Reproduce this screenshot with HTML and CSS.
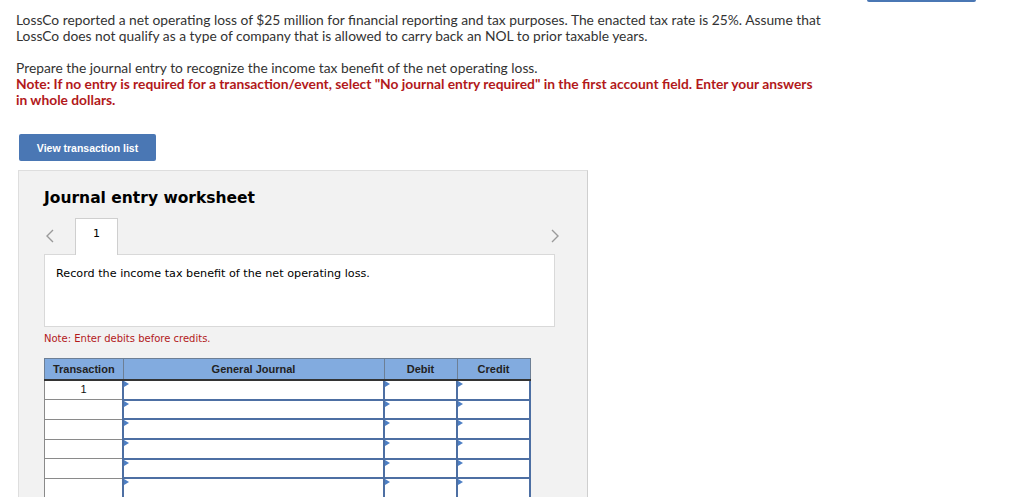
FILE: index.html
```html
<!DOCTYPE html>
<html lang="en">
<head>
    <meta charset="UTF-8">
    <title>Journal entry worksheet</title>
    <link rel="stylesheet" href="styles.css">
</head>
<body>
    <div class="top-tab"></div>
    <div class="question">
        <p>LossCo reported a net operating loss of $25 million for financial reporting and tax purposes. The enacted tax rate is 25%. Assume that LossCo does not qualify as a type of company that is allowed to carry back an NOL to prior taxable years.</p>
        <p class="task">Prepare the journal entry to recognize the income tax benefit of the net operating loss.<br>
        <strong class="note">Note: If no entry is required for a transaction/event, select "No journal entry required" in the first account field. Enter your answers in whole dollars.</strong></p>
    </div>

    <button class="view-btn">View transaction list</button>

    <div class="worksheet">
        <h2>Journal entry worksheet</h2>

        <div class="tabs">
            <svg class="arrow" width="10" height="14" viewBox="0 0 10 14"><path d="M8 1 L2 7 L8 13" fill="none" stroke="#9a9a9a" stroke-width="1.4"/></svg>
            <span class="tab">1</span>
            <svg class="arrow right" width="10" height="14" viewBox="0 0 10 14"><path d="M2 1 L8 7 L2 13" fill="none" stroke="#9a9a9a" stroke-width="1.4"/></svg>
        </div>

        <div class="tab-body">Record the income tax benefit of the net operating loss.</div>

        <div class="hint">Note: Enter debits before credits.</div>

        <table class="journal">
            <thead>
                <tr>
                    <th class="c-trans">Transaction</th>
                    <th class="c-acct">General Journal</th>
                    <th class="c-num">Debit</th>
                    <th class="c-num">Credit</th>
                </tr>
            </thead>
            <tbody>
                <tr><td class="c-trans">1</td><td class="field"></td><td class="field"></td><td class="field"></td></tr>
                <tr><td class="c-trans"></td><td class="field"></td><td class="field"></td><td class="field"></td></tr>
                <tr><td class="c-trans"></td><td class="field"></td><td class="field"></td><td class="field"></td></tr>
                <tr><td class="c-trans"></td><td class="field"></td><td class="field"></td><td class="field"></td></tr>
                <tr><td class="c-trans"></td><td class="field"></td><td class="field"></td><td class="field"></td></tr>
                <tr><td class="c-trans"></td><td class="field"></td><td class="field"></td><td class="field"></td></tr>
            </tbody>
        </table>
    </div>
</body>
</html>
```

FILE: styles.css
```css
body {
    margin: 0;
    padding: 12px 16px 0 16px;
    font-family: Lato, 'Open Sans', sans-serif;
    font-size: 13.8px;
    line-height: 16px;
    color: #333;
    background: #fff;
    position: relative;
    overflow: hidden;
}
.top-tab {
    position: absolute;
    top: 0;
    left: 867px;
    width: 109px;
    height: 2px;
    background: #4a77b4;
    border-radius: 0 0 2px 2px;
}
.question p {
    margin: 0 0 16px 0;
    width: 810px;
}
.note {
    color: #b2191b;
    line-height: 15px;
}
.view-btn {
    display: block;
    margin: 26px 0 0 3px;
    width: 137px;
    height: 27px;
    border: none;
    border-radius: 2px;
    background: #4a77b4;
    color: #fff;
    font-family: 'Liberation Sans', Arial, sans-serif;
    font-size: 10.5px;
    font-weight: bold;
    padding: 0;
}
.worksheet {
    margin: 9px 0 0 2px;
    width: 570px;
    height: 340px;
    background: #f2f2f2;
    border: 1px solid #dedede;
    border-right-color: #cfcfcf;
    padding: 0 0 0 25px;
    box-sizing: border-box;
    font-family: 'DejaVu Sans', Verdana, sans-serif;
}
.worksheet h2 {
    margin: 17px 0 0 0;
    font-size: 15.5px;
    line-height: 20px;
    color: #000;
}
.tabs {
    display: flex;
    align-items: center;
    margin-top: 9px;
    height: 37px;
    width: 516px;
    position: relative;
}
.arrow {
    margin: 0 20px 0 1px;
}
.arrow.right {
    position: absolute;
    right: 0;
    margin: 0;
}
.tab {
    width: 43px;
    height: 37px;
    box-sizing: border-box;
    background: #fff;
    border: 1px solid #cfcfcf;
    border-bottom: none;
    text-align: center;
    line-height: 30px;
    font-size: 11px;
    color: #000;
    position: relative;
    z-index: 1;
    margin-bottom: -1px;
    align-self: flex-end;
}
.tab-body {
    width: 511px;
    height: 73px;
    box-sizing: border-box;
    background: #fff;
    border: 1px solid #d9d9d9;
    padding: 11px 11px;
    font-size: 11.2px;
    line-height: 16px;
    color: #000;
}
.hint {
    margin-top: 5px;
    font-size: 10px;
    line-height: 14px;
    color: #b2191b;
}
.journal {
    margin-top: 12px;
    border-collapse: collapse;
    font-family: 'Liberation Sans', Arial, sans-serif;
    font-size: 11px;
}
.journal th {
    height: 20px;
    padding: 0;
    background: #82abdf;
    color: #222;
    font-weight: bold;
    border: 1px solid #6d7f95;
    border-bottom: 2px solid #333;
}
.c-trans { width: 77px; }
.c-acct { width: 260px; }
.c-num { width: 72px; }
.journal td {
    height: 17.7px;
    padding: 0;
    background: #fff;
}
.journal td.c-trans {
    border: 1px solid #8a8a8a;
    text-align: center;
    vertical-align: top;
    line-height: 16px;
    color: #111;
}
.journal td.field {
    border: 2px solid #4d6fa3;
    position: relative;
}
.journal td.field::before {
    content: "";
    position: absolute;
    top: 0;
    left: 0;
    border-left: 5px solid #4d7fc4;
    border-top: 3px solid transparent;
    border-bottom: 3px solid transparent;
}
```
